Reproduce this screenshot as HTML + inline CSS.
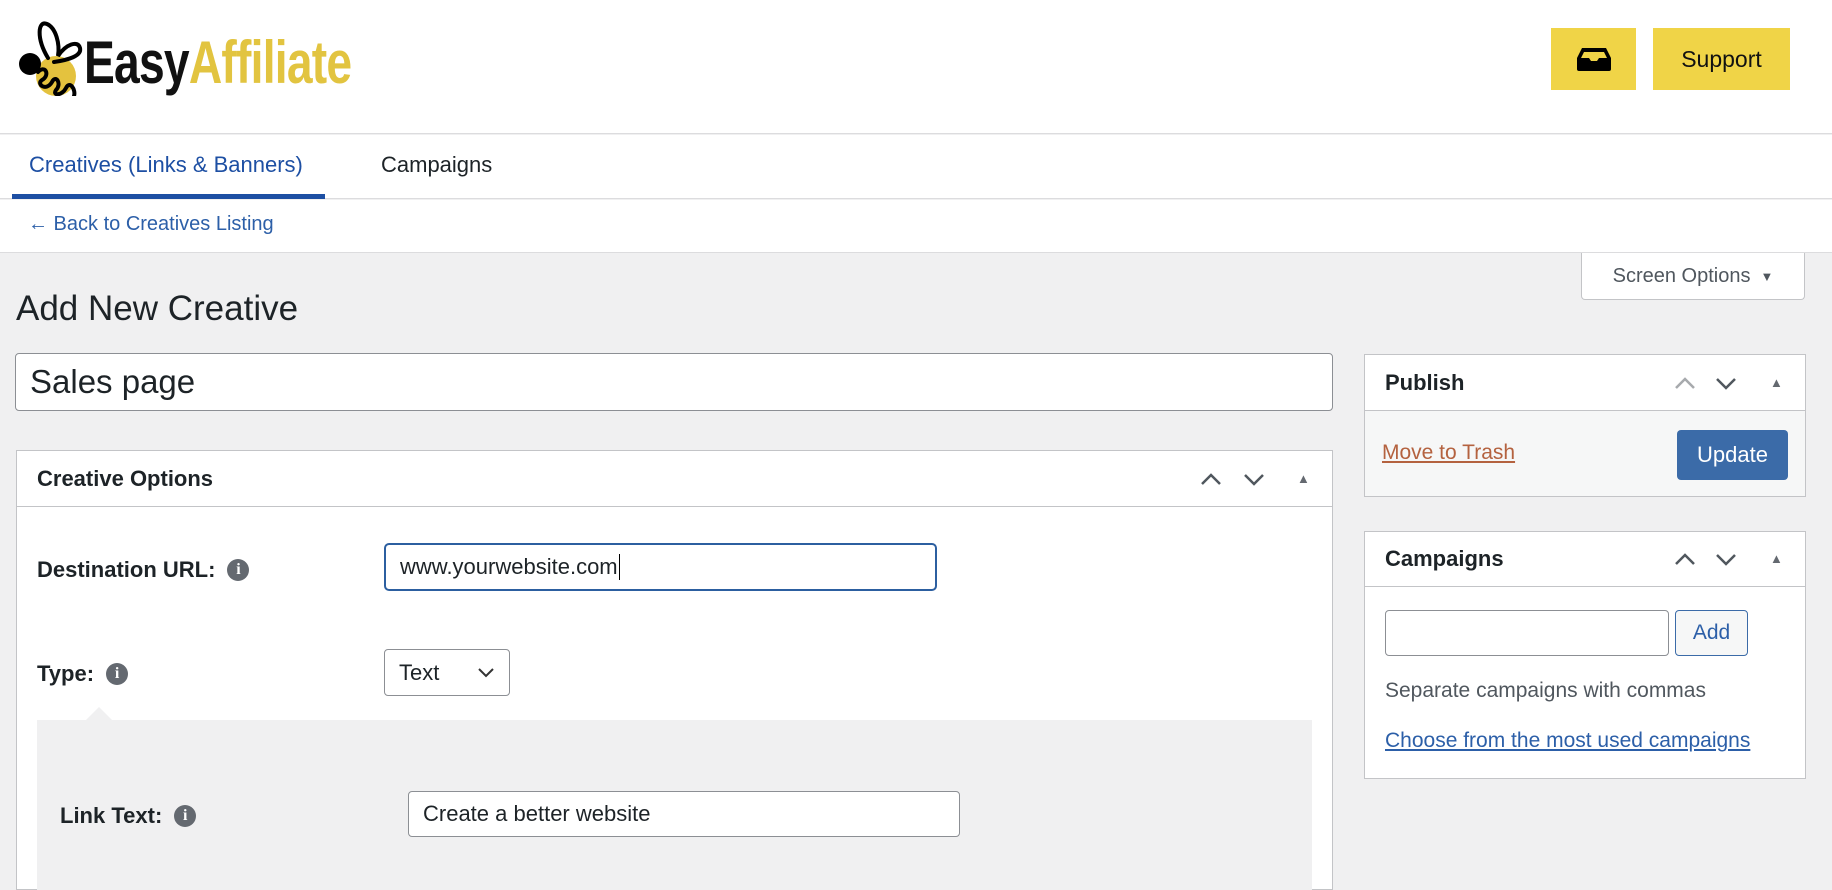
<!DOCTYPE html>
<html><head><meta charset="utf-8"><style>
*{box-sizing:border-box;margin:0;padding:0}
body{width:1832px;height:879px;overflow:hidden;background:#f0f0f1;font-family:"Liberation Sans",sans-serif;color:#1d2327;position:relative}
.a{position:absolute}
.hdr{left:0;top:0;width:1832px;height:134px;background:#fff;border-bottom:1px solid #dcdcde}
.tabs{left:0;top:135px;width:1832px;height:64px;background:#fff;border-bottom:1px solid #dcdcde}
.sub{left:0;top:200px;width:1832px;height:53px;background:#fff;border-bottom:1px solid #dcdcde}
.box{background:#fff;border:1px solid #c3c4c7}
.hd{font-weight:bold;font-size:22px;color:#1d2327}
.lbl{font-weight:bold;font-size:22px;color:#1d2327;display:flex;align-items:center}
.info{display:inline-block;width:22px;height:22px;border-radius:50%;background:#646970;color:#fff;font-size:16px;font-weight:bold;text-align:center;line-height:22px;font-family:"Liberation Serif",serif;margin-left:12px}
.inp{background:#fff;border:1px solid #8c8f94;border-radius:4px;font-size:22px;padding-left:14px;display:flex;align-items:center}
</style></head><body>
<div class="a hdr"></div>
<svg class="a" style="left:14px;top:16px" width="72" height="80" viewBox="0 0 72 80">
<circle cx="42" cy="60" r="20" fill="#e4c23e"/>
<path d="M34 42 C22 22,24 4,33 8 C42 12,46 28,44 40 C52 28,64 24,66 32 C68 40,54 44,40 46" fill="none" stroke="#000" stroke-width="4" stroke-linecap="round"/>
<circle cx="16" cy="48" r="11" fill="#000"/>
<path d="M24 56 C32 48,36 60,28 64 C22 68,32 76,38 66 C42 58,48 68,42 74 C38 80,48 80,52 72 C56 64,62 74,60 80" fill="none" stroke="#000" stroke-width="4" stroke-linecap="round"/>
</svg>
<div class="a" style="left:84px;top:31px;font-size:60px;font-weight:bold;line-height:64px;transform:scaleX(0.77);transform-origin:0 0;letter-spacing:-1px;white-space:nowrap"><span style="color:#111">Easy</span><span style="color:#e2c440">Affiliate</span></div>
<div class="a" style="left:1551px;top:28px;width:85px;height:62px;background:#f0d447"></div>
<svg class="a" style="left:1576px;top:47px" width="36" height="24" viewBox="0 0 36 24"><path d="M6 1h24l5 10v11a2 2 0 0 1-2 2H3a2 2 0 0 1-2-2V11z" fill="#000"/><path d="M8 5h20l3 6h-8l-2 3h-6l-2-3H5z" fill="#f0d447"/></svg>
<div class="a" style="left:1653px;top:28px;width:137px;height:62px;background:#f0d447;font-size:23px;display:flex;align-items:center;justify-content:center;color:#111">Support</div>

<div class="a tabs"></div>
<div class="a" style="left:29px;top:152px;font-size:22px;color:#1d4fa3">Creatives (Links &amp; Banners)</div>
<div class="a" style="left:12px;top:194px;width:313px;height:5px;background:#1d4fa3"></div>
<div class="a" style="left:381px;top:152px;font-size:22px;color:#1d2327">Campaigns</div>
<div class="a sub"></div>
<div class="a" style="left:28px;top:213px;font-size:20px;color:#2c5fa8">← Back to Creatives Listing</div>

<div class="a" style="left:1581px;top:253px;width:224px;height:47px;background:#fff;border:1px solid #c3c4c7;border-top:none;border-radius:0 0 4px 4px;font-size:20px;color:#50575e;display:flex;align-items:center;justify-content:center">Screen Options <span style="font-size:13px;margin-left:10px">▼</span></div>
<div class="a" style="left:16px;top:289px;font-size:35px;color:#1d2327">Add New Creative</div>
<div class="a inp" style="left:15px;top:353px;width:1318px;height:58px;font-size:33px">Sales page</div>

<svg width="0" height="0" style="position:absolute"><defs>
<g id="up"><path d="M2 12l9-9 9 9" fill="none" stroke-width="2.5"/></g>
<g id="dn"><path d="M2 3l9 9 9-9" fill="none" stroke-width="2.5"/></g>
</defs></svg>

<div class="a box" style="left:16px;top:450px;width:1317px;height:440px"></div>
<div class="a" style="left:16px;top:506px;width:1317px;height:1px;background:#c3c4c7"></div>
<div class="a hd" style="left:37px;top:466px">Creative Options</div>
<svg class="a" style="left:1200px;top:472px" width="22" height="15"><use href="#up" stroke="#50575e"/></svg>
<svg class="a" style="left:1243px;top:472px" width="22" height="15"><use href="#dn" stroke="#50575e"/></svg>
<div class="a" style="left:1297px;top:471px;font-size:13px;color:#646970">▲</div>

<div class="a lbl" style="left:37px;top:556px;height:28px">Destination URL:<span class="info">i</span></div>
<div class="a inp" style="left:384px;top:543px;width:553px;height:48px;border:2px solid #2c5fa0;border-radius:5px;font-size:22px">www.yourwebsite.com<span style="border-left:1px solid #000;height:26px;margin-left:1px"></span></div>
<div class="a lbl" style="left:37px;top:660px;height:28px">Type:<span class="info">i</span></div>
<div class="a inp" style="left:384px;top:649px;width:126px;height:47px">Text</div>
<svg class="a" style="left:478px;top:668px" width="16" height="10"><path d="M1 1l7 7 7-7" fill="none" stroke="#333" stroke-width="2"/></svg>
<div class="a" style="left:37px;top:720px;width:1275px;height:170px;background:#f0f0f1"></div>
<div class="a" style="left:86px;top:707px;width:0;height:0;border-left:13px solid transparent;border-right:13px solid transparent;border-bottom:13px solid #f0f0f1"></div>
<div class="a lbl" style="left:60px;top:802px;height:28px">Link Text:<span class="info">i</span></div>
<div class="a inp" style="left:408px;top:791px;width:552px;height:46px">Create a better website</div>

<div class="a box" style="left:1364px;top:354px;width:442px;height:143px;background:#f6f7f7"></div>
<div class="a" style="left:1365px;top:355px;width:440px;height:56px;background:#fff;border-bottom:1px solid #c3c4c7"></div>
<div class="a hd" style="left:1385px;top:370px">Publish</div>
<svg class="a" style="left:1674px;top:376px" width="22" height="15"><use href="#up" stroke="#a7aaad"/></svg>
<svg class="a" style="left:1715px;top:376px" width="22" height="15"><use href="#dn" stroke="#50575e"/></svg>
<div class="a" style="left:1770px;top:375px;font-size:13px;color:#646970">▲</div>
<div class="a" style="left:1382px;top:441px;font-size:21px;color:#b4623f;text-decoration:underline">Move to Trash</div>
<div class="a" style="left:1677px;top:430px;width:111px;height:50px;background:#3b6ba8;border-radius:4px;color:#fff;font-size:22px;display:flex;align-items:center;justify-content:center">Update</div>

<div class="a box" style="left:1364px;top:531px;width:442px;height:248px"></div>
<div class="a" style="left:1365px;top:586px;width:440px;height:1px;background:#c3c4c7"></div>
<div class="a hd" style="left:1385px;top:546px">Campaigns</div>
<svg class="a" style="left:1674px;top:552px" width="22" height="15"><use href="#up" stroke="#50575e"/></svg>
<svg class="a" style="left:1715px;top:552px" width="22" height="15"><use href="#dn" stroke="#50575e"/></svg>
<div class="a" style="left:1770px;top:551px;font-size:13px;color:#646970">▲</div>
<div class="a inp" style="left:1385px;top:610px;width:284px;height:46px"></div>
<div class="a" style="left:1675px;top:610px;width:73px;height:46px;border:1px solid #3b6ba8;border-radius:4px;background:#f6f7f7;color:#2c5fa8;font-size:21px;display:flex;align-items:center;justify-content:center">Add</div>
<div class="a" style="left:1385px;top:679px;font-size:21px;color:#50575e">Separate campaigns with commas</div>
<div class="a" style="left:1385px;top:729px;font-size:21px;color:#2c5fa8;text-decoration:underline">Choose from the most used campaigns</div>
</body></html>
